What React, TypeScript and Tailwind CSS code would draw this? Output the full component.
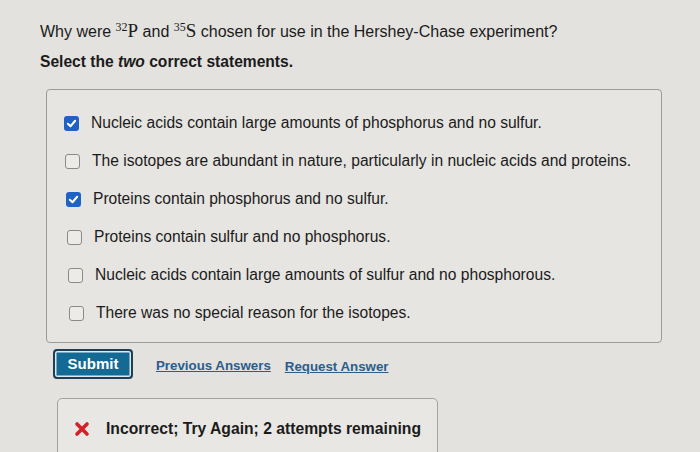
import React from "react";

const options = [
  { text: "Nucleic acids contain large amounts of phosphorus and no sulfur.", checked: true, ml: "ml-[17px]" },
  { text: "The isotopes are abundant in nature, particularly in nucleic acids and proteins.", checked: false, ml: "ml-[18px]" },
  { text: "Proteins contain phosphorus and no sulfur.", checked: true, ml: "ml-[19px]" },
  { text: "Proteins contain sulfur and no phosphorus.", checked: false, ml: "ml-[20px]" },
  { text: "Nucleic acids contain large amounts of sulfur and no phosphorous.", checked: false, ml: "ml-[21px]" },
  { text: "There was no special reason for the isotopes.", checked: false, ml: "ml-[22px]" },
];

function Box({ checked }: { checked: boolean }) {
  if (checked) {
    return (
      <span className="flex h-[15px] w-[15px] shrink-0 items-center justify-center rounded-[3px] bg-[#1f62c6]">
        <svg width="11" height="11" viewBox="0 0 12 12">
          <path d="M2 6.3 L4.9 9 L10 3" fill="none" stroke="white" strokeWidth="2.2" strokeLinecap="round" strokeLinejoin="round" />
        </svg>
      </span>
    );
  }
  return <span className="block h-[15px] w-[15px] shrink-0 rounded-[3px] border-[1.5px] border-[#8a8a88] bg-[#ecebe7]" />;
}

export default function App() {
  return (
    <div
      className="h-[452px] w-[700px] overflow-hidden bg-[#e3e2de] pl-[40px] pt-[20px] text-[#1b1b1b]"
      style={{ fontFamily: '"Liberation Sans", Arial, sans-serif' }}
    >
      <p className="text-[16px] leading-[22px]">
        Why were{" "}
        <span style={{ fontFamily: '"Liberation Serif", serif' }}>
          <sup className="text-[12px]">32</sup>
          <span className="text-[19px]">P</span>
        </span>{" "}
        and{" "}
        <span style={{ fontFamily: '"Liberation Serif", serif' }}>
          <sup className="text-[12px]">35</sup>
          <span className="text-[19px]">S</span>
        </span>{" "}
        chosen for use in the Hershey-Chase experiment?
      </p>
      <p className="mt-[9px] text-[15.6px] font-bold leading-[20px]">
        Select the <i>two</i> correct statements.
      </p>

      <div className="ml-[6px] mt-[17px] h-[254px] w-[616px] rounded-[4px] border border-[#9b9a97] bg-[#e6e5e1] pt-[23px]">
        <div className="flex flex-col gap-[18px]">
          {options.map((o, i) => (
            <div key={i} className={`flex h-[20px] items-center gap-[12px] ${o.ml}`}>
              <Box checked={o.checked} />
              <span className="text-[15.6px] leading-[20px]">{o.text}</span>
            </div>
          ))}
        </div>
      </div>

      <div className="mt-[6px] flex items-center">
        <button className="ml-[13px] flex h-[30px] w-[80px] items-center justify-center rounded-[4px] border-2 border-[#1d3f5a] bg-[#126a95] text-[15px] font-bold text-white shadow-[inset_0_0_0_1.5px_#dfe9ef]">
          Submit
        </button>
        <a className="ml-[23px] mt-[3px] text-[13.3px] font-bold text-[#2c5d8c] underline">Previous Answers</a>
        <a className="ml-[14px] mt-[6px] text-[13.3px] font-bold text-[#2c5d8c] underline">Request Answer</a>
      </div>

      <div className="ml-[17px] mt-[19px] flex h-[70px] w-[381px] items-start rounded-[5px] border border-[#a3a29f] bg-[#e8e7e3] pl-[16px] pt-[20px]">
        <svg width="16" height="16" viewBox="0 0 16 16" className="mt-[2px] shrink-0">
          <path d="M3 3 L13 13 M13 3 L3 13" stroke="#d4202a" strokeWidth="3.6" strokeLinecap="round" />
        </svg>
        <span className="ml-[16px] text-[15.7px] font-bold leading-[20px]">Incorrect; Try Again; 2 attempts remaining</span>
      </div>
    </div>
  );
}
